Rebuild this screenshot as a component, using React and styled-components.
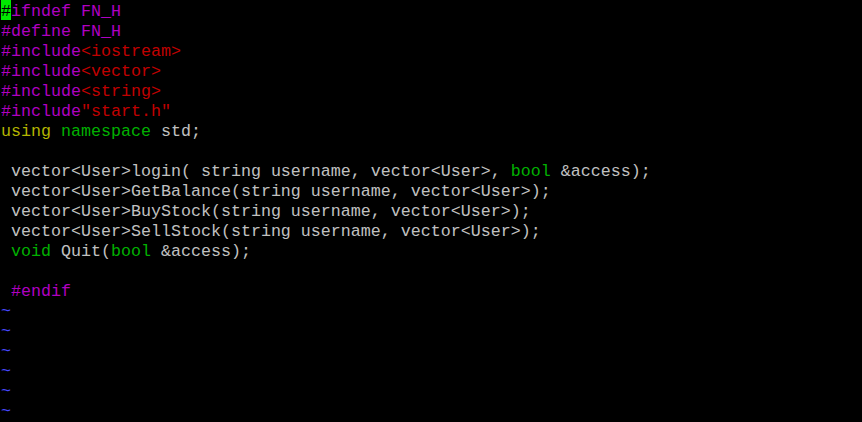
import React from "react";
import styled, { createGlobalStyle } from "styled-components";

const GlobalStyle = createGlobalStyle`
  html, body {
    margin: 0;
    padding: 0;
    background: #000;
  }
`;

const colors = {
  pre: "#b000c0",
  str: "#c00000",
  type: "#00b000",
  stmt: "#b4b400",
  text: "#c0c0c0",
  tilde: "#4848ff",
};

const Screen = styled.div`
  width: 862px;
  height: 422px;
  background: #000;
  padding-left: 1px;
  box-sizing: border-box;
  overflow: hidden;
  font-family: "Courier New", "Liberation Mono", monospace;
  font-size: 16.67px;
  color: ${colors.text};
`;

const Line = styled.div`
  height: 20px;
  line-height: 24px;
  white-space: pre;
  overflow: hidden;
`;

const Tok = styled.span`
  color: ${(p) => colors[p.$c] || colors.text};
`;

const Cursor = styled.span`
  display: inline-block;
  background: #00e800;
  color: #000;
  height: 20px;
  line-height: 24px;
  vertical-align: top;
`;

const code = [
  [["cursor", "#"], ["pre", "ifndef FN_H"]],
  [["pre", "#define FN_H"]],
  [["pre", "#include"], ["str", "<iostream>"]],
  [["pre", "#include"], ["str", "<vector>"]],
  [["pre", "#include"], ["str", "<string>"]],
  [["pre", "#include"], ["str", "\"start.h\""]],
  [["stmt", "using"], ["text", " "], ["type", "namespace"], ["text", " std;"]],
  [],
  [["text", " vector<User>login( string username, vector<User>, "], ["type", "bool"], ["text", " &access);"]],
  [["text", " vector<User>GetBalance(string username, vector<User>);"]],
  [["text", " vector<User>BuyStock(string username, vector<User>);"]],
  [["text", " vector<User>SellStock(string username, vector<User>);"]],
  [["text", " "], ["type", "void"], ["text", " Quit("], ["type", "bool"], ["text", " &access);"]],
  [],
  [["text", " "], ["pre", "#endif"]],
];

export default function App() {
  return (
    <>
      <GlobalStyle />
      <Screen>
        {code.map((line, i) => (
          <Line key={i}>
            {line.length === 0
              ? " "
              : line.map(([c, t], j) =>
                  c === "cursor" ? (
                    <Cursor key={j}>{t}</Cursor>
                  ) : (
                    <Tok key={j} $c={c}>
                      {t}
                    </Tok>
                  )
                )}
          </Line>
        ))}
        {Array.from({ length: 6 }).map((_, i) => (
          <Line key={"t" + i}>
            <Tok $c="tilde">~</Tok>
          </Line>
        ))}
      </Screen>
    </>
  );
}
